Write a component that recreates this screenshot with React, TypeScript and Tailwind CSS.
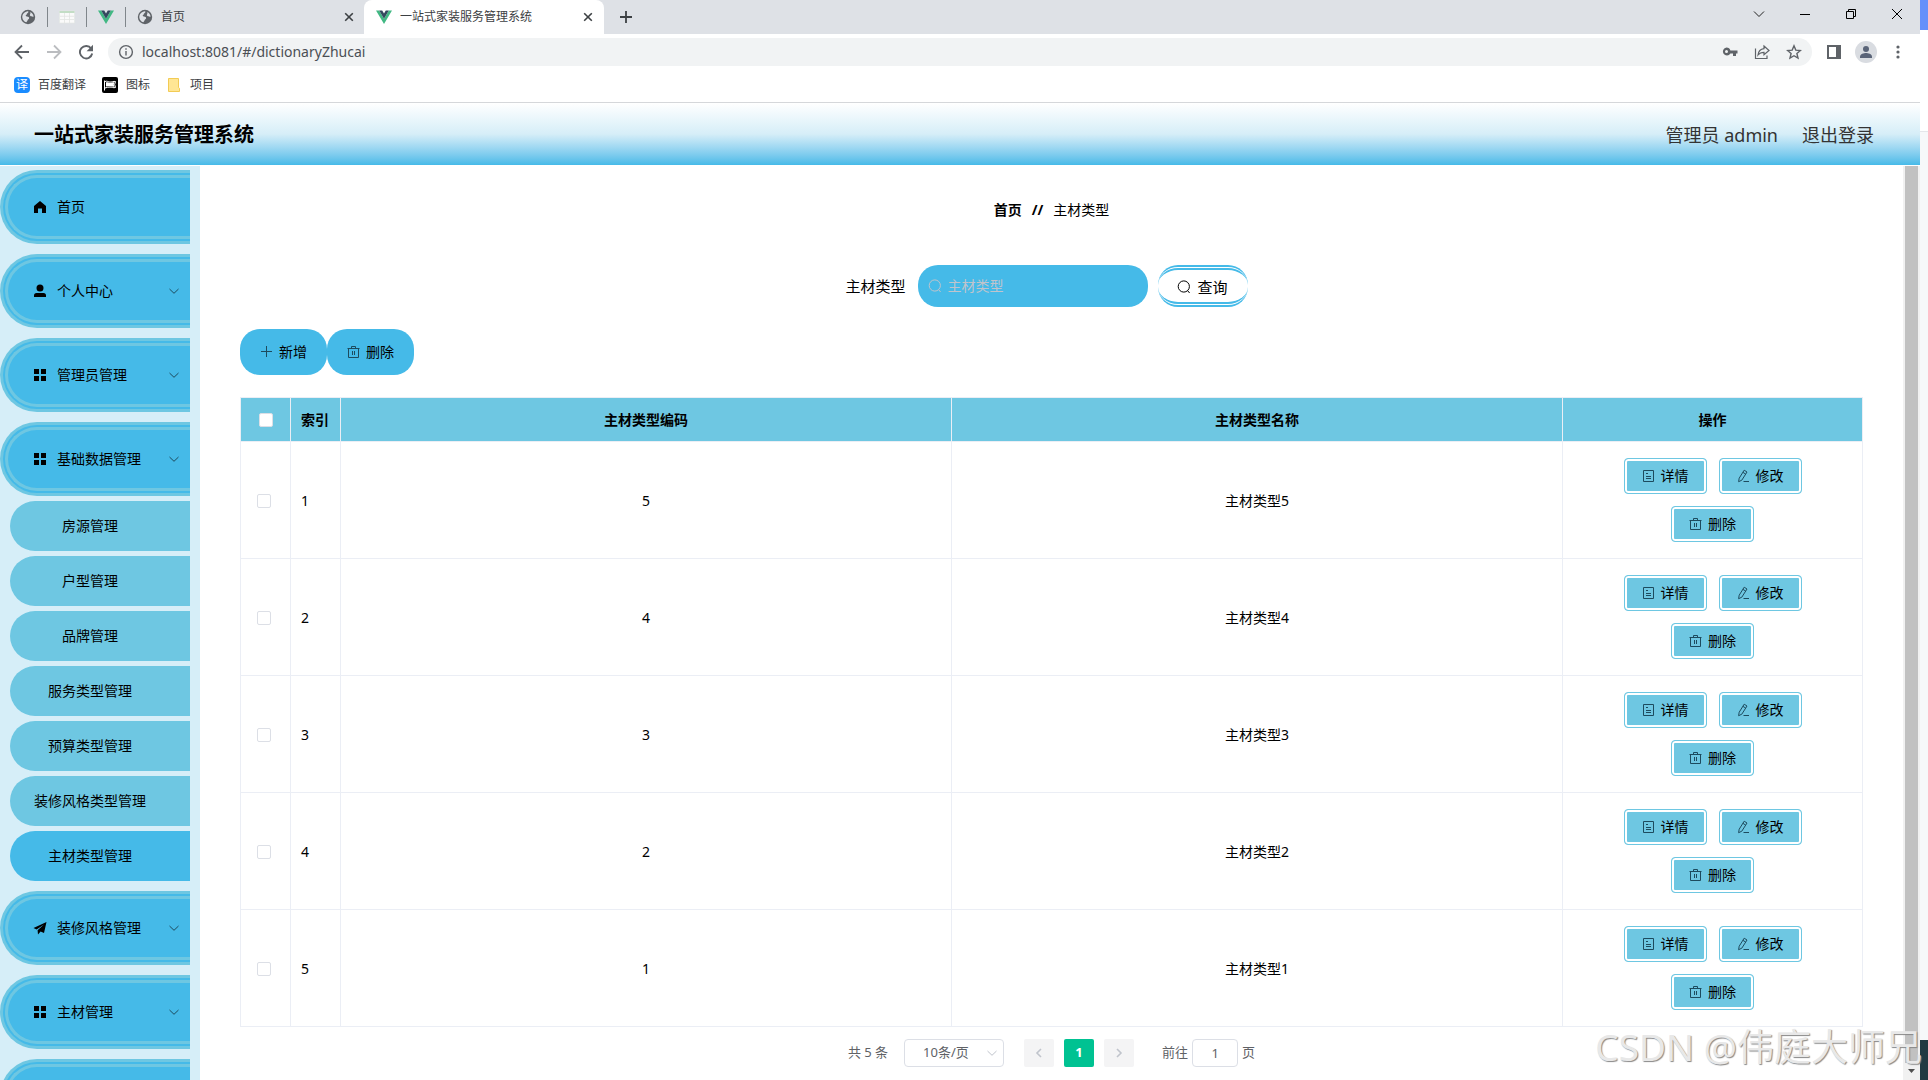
import React, { useState } from 'react';
import clsx from 'clsx';

type IconProps = { className?: string };

const GlobeIcon: React.FC<IconProps> = ({ className }) => (
  <svg viewBox="0 0 16 16" className={clsx('h-4 w-4 shrink-0', className)} aria-hidden="true">
    <circle cx="8" cy="8" r="7.2" fill="#5f6368" />
    <path d="M2.300 8.400C2.200 5.200 4.600 2.600 8 2.300c.9.600.2 1.500-.6 1.900-.9.500-.4 1.400-1.300 1.700-.8.300-.3 1.500.8 1.500 1.500 0 2.300.7 2.200 1.800-.1 1.100-1.400 1-1.500 2.100-.1.900-.8 1.200-1.200 2-2.300-.6-3.800-2.500-4.100-4.900z" fill="#dee1e6" />
    <path d="M10.200 3c1.700.8 3.200 2.500 3.400 4.600-.8.500-1.500-.1-2.200-.3-.9-.2-1.700-.6-1.500-1.600.1-.9.900-1 .3-2.700z" fill="#dee1e6" />
  </svg>
);

const SheetIcon = () => (
  <svg viewBox="0 0 16 16" className="h-4 w-4 shrink-0" aria-hidden="true">
    <rect x="0.500" y="2" width="15" height="12" fill="#fafafa" stroke="#e3e8e3" strokeWidth="0.600" />
    <rect x="0.500" y="2" width="15" height="2" fill="#c3ddc5" />
    <path d="M1 7.300h14M1 10.500h14M5.500 4v10M10.500 4v10" stroke="#e2e5e2" strokeWidth="0.800" />
  </svg>
);

const VueIcon = () => (
  <svg viewBox="0 0 16 16" className="h-4 w-4 shrink-0" aria-hidden="true">
    <path d="M0 1.500h3.200L8 9.700l4.800-8.200H16L8 15z" fill="#41b883" />
    <path d="M3.200 1.500H6.200L8 4.600l1.800-3.100h3L8 9.700z" fill="#34495e" />
  </svg>
);

const CloseIcon: React.FC<IconProps> = ({ className }) => (
  <svg viewBox="0 0 16 16" className={clsx('h-4 w-4', className)} fill="none" stroke="#3c4043" strokeWidth="1.600" aria-hidden="true">
    <path d="M4.200 4.200l7.600 7.600M11.800 4.200l-7.600 7.600" />
  </svg>
);

// line icons of the admin theme share one 14px box
const SearchIcon: React.FC<IconProps> = ({ className }) => (
  <svg viewBox="0 0 14 14" className={clsx('h-3.5 w-3.5 shrink-0', className)} fill="none" stroke="currentColor" aria-hidden="true">
    <circle cx="6.800" cy="6.500" r="5.600" />
    <path d="M10.600 10.600l2 2.400" />
  </svg>
);

const PlusIcon = () => (
  <svg viewBox="0 0 14 14" className="h-3.5 w-3.5 shrink-0" fill="none" stroke="#1d4b5e" aria-hidden="true">
    <path d="M6.500 1v11M1 6.500h11" />
  </svg>
);

const TrashIcon = () => (
  <svg viewBox="0 0 14 14" className="h-3.5 w-3.5 shrink-0" fill="none" stroke="#1d4b5e" aria-hidden="true">
    <path d="M.5 3.500h12M4.500 3v-1.500h4v1.500M1.500 3.500v9h10v-9M5.500 6v4M7.500 6v4" />
  </svg>
);

const DetailIcon = () => (
  <svg viewBox="0 0 14 14" className="h-3.5 w-3.5 shrink-0" fill="none" stroke="#1d4b5e" aria-hidden="true">
    <path d="M1.500 1.500h10v11h-10zM4 4.500h2M4 7.500h5M4 9.500h5" />
  </svg>
);

const EditIcon = () => (
  <svg viewBox="0 0 14 14" className="h-3.5 w-3.5 shrink-0" fill="none" stroke="#1d4b5e" aria-hidden="true">
    <path d="M7.200 1.200l2.800 1.800-5.200 8.200-3.200 1.500.6-3.500zM5.900 3.300l2.800 1.800M6.500 12.500h5.500" />
  </svg>
);

const ChevronDown: React.FC<IconProps> = ({ className }) => (
  <svg viewBox="0 0 12 12" className={clsx('h-3 w-3 shrink-0', className)} fill="none" stroke="currentColor" aria-hidden="true">
    <path d="M1.500 4L6 8.300 10.500 4" />
  </svg>
);

const MenuIcon: React.FC<{ name: string }> = ({ name }) => (
  <svg viewBox="0 0 14 14" className="h-3.5 w-3.5 shrink-0" aria-hidden="true">
    {name === 'home' && <path d="M7 1L1 6v7h4V8.500h4V13h4V6z" />}
    {name === 'user' && <path d="M7 .5a3.300 3.300 0 1 1 0 7 3.300 3.300 0 0 1 0-7zM3.500 9h7A2.500 2.500 0 0 1 13 11.500V13H1v-1.500A2.500 2.500 0 0 1 3.500 9z" />}
    {name === 'grid' && <path d="M1 1h5v5H1zM8 1h5v5H8zM1 8h5v5H1zM8 8h5v5H8z" />}
    {name === 'plane' && <path d="M13.500 1L11 12 7.600 10.600 5 13.500 4.600 9.200 11 3.500 3.600 8.400.5 7z" />}
  </svg>
);

const subItems = ['房源管理', '户型管理', '品牌管理', '服务类型管理', '预算类型管理', '装修风格类型管理', '主材类型管理'];

const menus = [
  { title: '首页', icon: 'home' },
  { title: '个人中心', icon: 'user', arrow: true },
  { title: '管理员管理', icon: 'grid', arrow: true },
  { title: '基础数据管理', icon: 'grid', arrow: true, children: subItems },
  { title: '装修风格管理', icon: 'plane', arrow: true },
  { title: '主材管理', icon: 'grid', arrow: true },
  { title: '', icon: 'grid', arrow: true },
];

const rows = [5, 4, 3, 2, 1].map((code, i) => ({ index: i + 1, code, name: `主材类型${code}` }));

const BrowserChrome = () => (
  <div className="shrink-0 border-b border-[#d5d7da] text-xs text-[#3c4043]">
    <div className="flex h-[34px] items-center bg-[#dee1e6]">
      <div className="flex flex-1 items-center">
        <button className="flex h-5 w-12 items-center justify-center border-r border-[#80868b] pl-2" aria-label="标签页 1"><GlobeIcon /></button>
        <button className="flex h-5 w-[39px] items-center justify-center border-r border-[#80868b]" aria-label="标签页 2"><SheetIcon /></button>
        <button className="flex h-5 w-[39px] items-center justify-center border-r border-[#80868b]" aria-label="标签页 3"><VueIcon /></button>
        <div className="flex w-[238px] items-center gap-2 pr-[7px] pl-[11px]">
          <GlobeIcon />
          <span className="flex-1">首页</span>
          <button aria-label="关闭"><CloseIcon /></button>
        </div>
        <div className="flex h-[34px] w-60 items-center gap-2 rounded-t-lg bg-white pr-2 pl-3">
          <VueIcon />
          <span className="flex-1 whitespace-nowrap">一站式家装服务管理系统</span>
          <button aria-label="关闭"><CloseIcon /></button>
        </div>
        <button className="ml-3.5" aria-label="新标签页">
          <svg viewBox="0 0 16 16" className="h-4 w-4" stroke="#3c4043" strokeWidth="1.800"><path d="M8 2v12M2 8h12" /></svg>
        </button>
      </div>
      <div className="flex items-center gap-[30px] pr-[15px] pb-1.5">
        <button aria-label="搜索标签页">
          <svg viewBox="0 0 16 16" className="h-4 w-4" fill="none" stroke="#222" strokeWidth="1"><path d="M3 5.500L8 10.500l5-5" /></svg>
        </button>
        <button aria-label="最小化">
          <svg viewBox="0 0 16 16" className="h-4 w-4" stroke="#000"><path d="M3 8.500h10" /></svg>
        </button>
        <button aria-label="还原">
          <svg viewBox="0 0 16 16" className="h-4 w-4" fill="none" stroke="#000"><path d="M3.500 5.500h7v7h-7zM5.500 5.500v-2h7v7h-2" /></svg>
        </button>
        <button aria-label="关闭窗口">
          <svg viewBox="0 0 16 16" className="h-4 w-4" stroke="#000"><path d="M3 3l10 10M13 3L3 13" /></svg>
        </button>
      </div>
    </div>
    <div className="flex h-9 items-center px-3.5">
      <div className="flex w-[94px] shrink-0 gap-4">
        <button aria-label="后退">
          <svg viewBox="0 0 16 16" className="h-4 w-4" fill="none" stroke="#5f6368" strokeWidth="1.800"><path d="M15 8H2M8 1.500L1.500 8 8 14.500" /></svg>
        </button>
        <button aria-label="前进">
          <svg viewBox="0 0 16 16" className="h-4 w-4" fill="none" stroke="#bbbdc0" strokeWidth="1.800"><path d="M1 8h13M8 1.500L14.500 8 8 14.500" /></svg>
        </button>
        <button aria-label="刷新">
          <svg viewBox="0 0 16 16" className="h-4 w-4"><path d="M13.200 4.600A6.200 6.200 0 1 0 14.200 9.500" fill="none" stroke="#5f6368" strokeWidth="1.900" /><path d="M15 .8v6.400H8.600z" fill="#5f6368" /></svg>
        </button>
      </div>
      <div className="flex h-7 flex-1 items-center rounded-full bg-[#f1f3f4] px-2.5">
        <svg viewBox="0 0 16 16" className="h-4 w-4" fill="none" stroke="#5f6368" strokeWidth="1.400"><circle cx="8" cy="8" r="6.400" /><path d="M8 7v4.500M8 4.200v1.600" /></svg>
        <input
          aria-label="地址"
          defaultValue="localhost:8081/#/dictionaryZhucai"
          className="ml-2 flex-1 bg-transparent text-sm text-[#4b4f54] outline-none"
        />
        <div className="flex items-center gap-4">
          <svg viewBox="0 0 16 16" className="h-4 w-4" fill="#5f6368"><path fillRule="evenodd" d="M4.500 3.500a4 4 0 0 1 3.900 3H15.500v3h-1.500V12h-3V9.500H8.400a4 4 0 1 1-3.900-6zm0 2.600a1.500 1.500 0 1 0 0 3 1.500 1.500 0 0 0 0-3z" /></svg>
          <svg viewBox="0 0 16 16" className="h-4 w-4" fill="none" stroke="#5f6368" strokeWidth="1.200"><path d="M1.500 4.500v10h11.500v-3M10 2l5 4.500-5 4.200V8.300c-2.500 0-4.500.8-6 2.700.4-3.400 2.400-6 6-6.400z" /></svg>
          <svg viewBox="0 0 16 16" className="h-4 w-4" fill="none" stroke="#5f6368" strokeWidth="1.400"><path d="M8 1.800l1.800 4.300 4.600.4-3.500 3 1.100 4.600L8 11.700l-4 2.400 1.100-4.600-3.500-3 4.600-.4z" /></svg>
        </div>
      </div>
      <div className="flex items-center gap-[13px] pl-[14px]">
        <svg viewBox="0 0 16 16" className="h-4 w-4"><path fillRule="evenodd" d="M1 1h14v14H1zM3 3v10h7V3z" fill="#5f6368" /></svg>
        <svg viewBox="0 0 22 22" className="h-[22px] w-[22px]"><circle cx="11" cy="11" r="11" fill="#d9dce1" /><circle cx="11" cy="8" r="3" fill="#5a6478" /><path d="M5 17v-1.500c0-2.500 4-3.500 6-3.500s6 1 6 3.500V17z" fill="#5a6478" /></svg>
        <svg viewBox="0 0 16 16" className="h-4 w-4" fill="#5f6368"><circle cx="8" cy="3" r="1.600" /><circle cx="8" cy="8" r="1.600" /><circle cx="8" cy="13" r="1.600" /></svg>
      </div>
    </div>
    <nav className="flex h-8 items-center gap-4 px-3.5 pb-0.5">
      <a href="#fanyi" className="flex items-center gap-2">
        <span className="flex h-4 w-4 items-center justify-center rounded-sm bg-[#1a8cff] text-xs text-white">译</span>百度翻译
      </a>
      <a href="#icons" className="flex items-center gap-2">
        <svg viewBox="0 0 16 16" className="h-4 w-4"><rect width="16" height="16" rx="2" /><path d="M2.500 3.500v10M3 4.500c2-1 3.500.6 5 .6S11.500 4 13.500 4.500l-.8 3 .8 3c-2 .6-4-.4-5.500-.4s-3 .2-5 .9" stroke="#fff" fill="none" /><path d="M4 5.300c1.500-.5 2.600.6 4 .6s3-.9 4.400-.7l-.6 2.300.6 2.200c-1.600.2-3-.5-4.400-.5S5.400 9.300 4 9.600z" fill="#fff" /></svg>图标
      </a>
      <a href="#project" className="flex items-center gap-2">
        <svg viewBox="0 0 16 16" className="h-4 w-4"><path d="M2.500 1.500h10v9l1 .8v3.200h-11z" fill="#ffe694" stroke="#f2cb54" /></svg>项目
      </a>
    </nav>
  </div>
);

const Sidebar = () => (
  <aside className="w-[200px] shrink-0 overflow-hidden bg-[#d6eef8] pt-1 pr-2.5">
    <ul>
      {menus.map(menu => (
        <li key={menu.title} className="mb-2.5">
          <a
            href="#menu"
            className="flex h-[74px] items-center rounded-l-[40px] border-8 border-r-0 border-double border-[#6ec7e2] bg-[#45bae8] pr-2.5 pl-[25px] text-sm text-black"
          >
            <MenuIcon name={menu.icon} />
            <span className="ml-2.5 flex-1">{menu.title}</span>
            {menu.arrow && <ChevronDown className="text-[#1d4b5e]" />}
          </a>
          {menu.children && (
            <ul className="flex flex-col gap-[5px] pt-[5px] pl-2.5">
              {menu.children.map(child => (
                <li key={child}>
                  <a
                    href="#sub"
                    className={clsx(
                      'flex h-[50px] items-center justify-center rounded-l-[25px] pr-5 text-sm text-black',
                      child === '主材类型管理' ? 'bg-[#45bae8]' : 'bg-[#6ec7e2]'
                    )}
                  >
                    {child}
                  </a>
                </li>
              ))}
            </ul>
          )}
        </li>
      ))}
    </ul>
  </aside>
);

const ActionButton: React.FC<{ icon: React.ReactNode; children: React.ReactNode }> = ({ icon, children }) => (
  <button className="flex h-9 items-center gap-[5px] rounded border border-[#6ec7e2] bg-[#6ec7e2] px-[17px] text-sm text-black shadow-[inset_0_0_0_2px_#fff]">
    {icon}
    {children}
  </button>
);

const checkboxClass = 'block h-3.5 w-3.5 appearance-none rounded-xs border border-[#dcdfe6] bg-white checked:bg-[#45bae8]';

const DataTable = () => {
  const [selected, setSelected] = useState<number[]>([]);

  const toggle = (index: number) => {
    setSelected(selected.includes(index) ? selected.filter(i => i !== index) : [...selected, index]);
  };

  const cell = 'border border-[#ebeef5]';

  return (
    <table className="mt-[22px] w-full table-fixed border-collapse text-sm text-black">
      <colgroup>
        <col className="w-[50px]" />
        <col className="w-[50px]" />
        <col />
        <col />
        <col className="w-[300px]" />
      </colgroup>
      <thead>
        <tr className="h-11 bg-[#6ec7e2]">
          <th className={cell}>
            <input
              type="checkbox"
              aria-label="全选"
              className={clsx(checkboxClass, 'mx-auto')}
              checked={selected.length === rows.length}
              onChange={() => setSelected(selected.length === rows.length ? [] : rows.map(r => r.index))}
            />
          </th>
          <th className={clsx(cell, 'pl-2.5 text-left')}>索引</th>
          <th className={cell}>主材类型编码</th>
          <th className={cell}>主材类型名称</th>
          <th className={cell}>操作</th>
        </tr>
      </thead>
      <tbody>
        {rows.map(row => (
          <tr key={row.index} className="h-[117px]">
            <td className={clsx(cell, 'pt-0.5 pl-4')}>
              <input
                type="checkbox"
                aria-label={`选择 ${row.name}`}
                className={checkboxClass}
                checked={selected.includes(row.index)}
                onChange={() => toggle(row.index)}
              />
            </td>
            <td className={clsx(cell, 'pt-0.5 pl-2.5')}>{row.index}</td>
            <td className={clsx(cell, 'pt-0.5 text-center')}>{row.code}</td>
            <td className={clsx(cell, 'pt-0.5 text-center')}>{row.name}</td>
            <td className={cell}>
              <div className="flex flex-wrap justify-center gap-3 px-10">
                <ActionButton icon={<DetailIcon />}>详情</ActionButton>
                <ActionButton icon={<EditIcon />}>修改</ActionButton>
                <ActionButton icon={<TrashIcon />}>删除</ActionButton>
              </div>
            </td>
          </tr>
        ))}
      </tbody>
    </table>
  );
};

const Pagination = () => (
  <div className="mt-3 flex items-center justify-center text-[13px] text-[#606266]">
    <span>共 5 条</span>
    <div className="relative ml-4">
      <select aria-label="每页条数" className="block h-7 w-[100px] appearance-none rounded-sm border border-[#dcdfe6] bg-white pl-[18px]">
        <option>10条/页</option>
      </select>
      <ChevronDown className="pointer-events-none absolute top-2 right-1.5 text-[#c0c4cc]" />
    </div>
    <div className="ml-5 flex gap-2.5">
      <button className="flex h-7 w-[30px] items-center justify-center rounded-xs bg-[#f4f4f5]" aria-label="上一页">
        <svg viewBox="0 0 12 12" className="h-3 w-3" fill="none" stroke="#c0c4cc" strokeWidth="1.600"><path d="M8 2L4 6l4 4" /></svg>
      </button>
      <button className="h-7 w-[30px] rounded-xs bg-[#00c292] font-bold text-white">1</button>
      <button className="flex h-7 w-[30px] items-center justify-center rounded-xs bg-[#f4f4f5]" aria-label="下一页">
        <svg viewBox="0 0 12 12" className="h-3 w-3" fill="none" stroke="#c0c4cc" strokeWidth="1.600"><path d="M4 2l4 4-4 4" /></svg>
      </button>
    </div>
    <label className="ml-7 flex items-center gap-1">
      前往
      <input defaultValue="1" className="h-7 w-[46px] rounded-sm border border-[#dcdfe6] text-center outline-none" />
      页
    </label>
  </div>
);

export default function App() {
  const [keyword, setKeyword] = useState('');

  return (
    <div className="relative flex h-screen overflow-hidden bg-white font-['Noto_Sans','Noto_Sans_CJK_SC',sans-serif]">
      <div className="flex min-w-0 flex-1 flex-col">
        <BrowserChrome />
        <header className="mb-px flex h-[62px] shrink-0 items-center justify-between bg-linear-to-b from-white via-[#d6eef8] to-[#45bae8] pt-0.5 pr-[46px] pl-[34px]">
          <h1 className="text-xl font-bold text-black">一站式家装服务管理系统</h1>
          <div className="flex gap-6 text-lg text-[#333]">
            <span>管理员 admin</span>
            <a href="#logout">退出登录</a>
          </div>
        </header>
        <div className="flex min-h-0 flex-1">
          <Sidebar />
          <main className="min-w-0 flex-1 overflow-hidden px-10 pt-[34px]">
            <nav className="flex h-5 items-center justify-center gap-2.5 text-sm text-black">
              <a href="#home" className="font-bold">首页</a>
              <span className="font-bold">//</span>
              <span>主材类型</span>
            </nav>
            <form className="mt-[45px] flex items-center justify-center pr-2.5" onSubmit={e => e.preventDefault()}>
              <label htmlFor="keyword" className="pr-3 text-[15px] text-black">主材类型</label>
              <div className="flex h-[42px] w-[230px] items-center gap-1.5 rounded-[20px] bg-[#45bae8] px-2.5 text-[#c0c4cc]">
                <SearchIcon />
                <input
                  id="keyword"
                  value={keyword}
                  onChange={e => setKeyword(e.target.value)}
                  placeholder="主材类型"
                  className="w-full bg-transparent text-sm text-black outline-none placeholder:text-[#c0c4cc]"
                />
              </div>
              <button className="ml-2.5 flex h-[42px] w-[90px] items-center justify-center gap-1.5 rounded-[20px] border-x-0 border-y-5 border-double border-[#45bae8] pt-0.5 text-[15px] text-black">
                <SearchIcon />
                查询
              </button>
            </form>
            <div className="mt-[22px] flex">
              <button className="flex h-[46px] w-[87px] items-center justify-center gap-[5px] rounded-[20px] bg-[#45bae8] text-sm text-black">
                <PlusIcon />新增
              </button>
              <button className="flex h-[46px] w-[87px] items-center justify-center gap-[5px] rounded-[20px] bg-[#45bae8] text-sm text-black">
                <TrashIcon />删除
              </button>
            </div>
            <DataTable />
            <Pagination />
          </main>
          <div className="flex w-[17px] shrink-0 flex-col items-center bg-[#f1f1f1]">
            <div className="w-[13px] flex-1 bg-[#c1c1c1]" />
            <svg viewBox="0 0 17 17" className="h-[17px] w-[17px]"><path d="M5 6h7l-3.500 4z" fill="#505050" /></svg>
          </div>
        </div>
      </div>
      {/* edge of the window behind */}
      <div className="flex w-2 shrink-0 flex-col">
        <div className="h-[30px] bg-[#6590fb]" />
        <div className="h-[102px] border-b border-[#e4e6ea] bg-white" />
        <div className="flex-1 bg-[#f6f8fa]" />
        <div className="h-10 bg-[#223a42]" />
      </div>
      <div className="pointer-events-none absolute right-1.5 bottom-1.5 text-[37px] leading-[54px] whitespace-nowrap text-[#e8e8e8] [text-shadow:1px_1px_1px_#888]">
        CSDN @伟庭大师兄
      </div>
    </div>
  );
}
